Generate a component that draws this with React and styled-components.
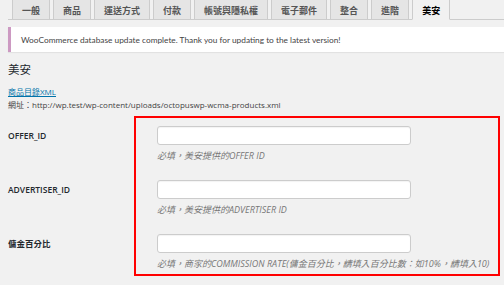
import React from "react";
import styled, { createGlobalStyle } from "styled-components";

const GlobalStyle = createGlobalStyle`
  html, body {
    margin: 0;
    padding: 0;
    background: #f1f1f1;
  }
  body {
    font-family: "Open Sans", "Noto Sans CJK TC", sans-serif;
    color: #23282d;
  }
`;

const tabs = ["一般", "商品", "運送方式", "付款", "帳號與隱私權", "電子郵件", "整合", "進階", "美安"];

const fields = [
  { label: "OFFER_ID", help: "必填，美安提供的OFFER ID" },
  { label: "ADVERTISER_ID", help: "必填，美安提供的ADVERTISER ID" },
  {
    label: "傭金百分比",
    help: "必填，商家的COMMISSION RATE(傭金百分比，請填入百分比數：如10%，請填入10)",
  },
];

const App = () => {
  return (
    <>
      <GlobalStyle />
      <Wrap>
        <TabBar>
          {tabs.map((t) => (
            <Tab key={t} $active={t === "美安"}>
              {t}
            </Tab>
          ))}
        </TabBar>
        <Notice>
          WooCommerce database update complete. Thank you for updating to the latest version!
        </Notice>
        <Heading>美安</Heading>
        <FeedLink href="#">商品目錄XML</FeedLink>
        <FeedUrl>網址：http://wp.test/wp-content/uploads/octopuswp-wcma-products.xml</FeedUrl>
        <Form>
          <LabelCol>
            {fields.map((f) => (
              <Label key={f.label}>{f.label}</Label>
            ))}
          </LabelCol>
          <FieldBox>
            {fields.map((f) => (
              <Field key={f.label}>
                <Input type="text" />
                <Help>{f.help}</Help>
              </Field>
            ))}
          </FieldBox>
        </Form>
      </Wrap>
    </>
  );
};

const Wrap = styled.div`
  padding-left: 8px;
`;

const TabBar = styled.div`
  display: flex;
  gap: 3px;
  height: 19px;
  padding-left: 4px;
  border-bottom: 1px solid #ccc;
`;

const Tab = styled.div`
  display: flex;
  align-items: center;
  padding: 1px 9px 0 9px;
  margin-bottom: ${(p) => (p.$active ? "-1px" : "0")};
  height: ${(p) => (p.$active ? "20px" : "19px")};
  box-sizing: border-box;
  border: 1px solid #ccc;
  border-top: none;
  border-bottom: ${(p) => (p.$active ? "1px solid #f1f1f1" : "none")};
  background: ${(p) => (p.$active ? "#f1f1f1" : "#e5e5e5")};
  color: ${(p) => (p.$active ? "#000" : "#555")};
  font-size: 9px;
  font-weight: 600;
`;

const Notice = styled.div`
  margin-top: 7px;
  height: 25px;
  box-sizing: border-box;
  display: flex;
  align-items: center;
  padding-left: 10px;
  background: #fff;
  border-left: 3px solid #cc99c2;
  box-shadow: 0 1px 1px rgba(0, 0, 0, 0.06);
  font-family: Lato, "Open Sans", sans-serif;
  font-size: 8.3px;
  color: #444;
`;

const Heading = styled.h2`
  margin: 11px 0 0;
  font-size: 11.5px;
  line-height: 14px;
  font-weight: 400;
  color: #23282d;
`;

const FeedLink = styled.a`
  display: block;
  margin-top: 8px;
  width: max-content;
  font-size: 8px;
  line-height: 13px;
  color: #0073aa;
  text-decoration: underline;
`;

const FeedUrl = styled.div`
  font-size: 8px;
  line-height: 13px;
  color: #444;
`;

const Form = styled.div`
  display: flex;
  align-items: flex-start;
  margin-top: 5px;
`;

const LabelCol = styled.div`
  width: 126px;
  padding-top: 10px;
  display: flex;
  flex-direction: column;
`;

const Label = styled.div`
  height: 54px;
  line-height: 19px;
  font-size: 8.5px;
  font-weight: 600;
  color: #23282d;
  &:last-child {
    height: 19px;
  }
`;

const FieldBox = styled.div`
  width: 366px;
  box-sizing: border-box;
  border: 2px solid #f00;
  padding: 8px 0 3px 21px;
  display: flex;
  flex-direction: column;
`;

const Field = styled.div`
  height: 54px;
  display: flex;
  flex-direction: column;
  &:last-child {
    height: 37px;
  }
`;

const Input = styled.input`
  width: 254px;
  height: 19px;
  box-sizing: border-box;
  margin: 0;
  border: 1px solid #ccc;
  border-radius: 3px;
  background: #fff;
  box-shadow: inset 0 1px 1px rgba(0, 0, 0, 0.05);
  outline: none;
`;

const Help = styled.div`
  margin-top: 4px;
  font-size: 9px;
  line-height: 13px;
  font-style: italic;
  color: #777;
  white-space: nowrap;
`;

export default App;
